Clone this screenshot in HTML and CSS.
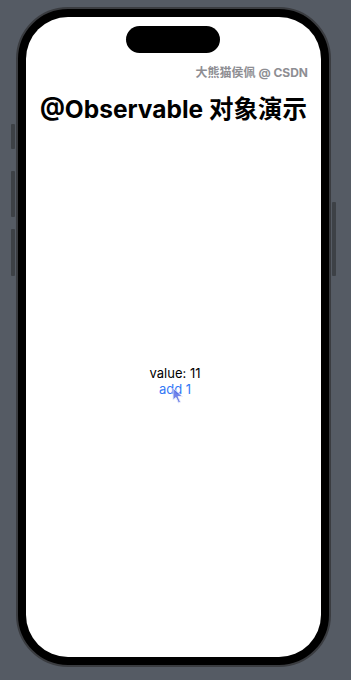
FILE: index.html
```html
<!DOCTYPE html>
<html lang="zh">

<head>
    <meta charset="UTF-8">
    <meta name="viewport" content="width=device-width, initial-scale=1.0">
    <title>@Observable 对象演示</title>
    <link rel="stylesheet" href="styles.css">
</head>

<body>
    <div class="phone">
        <div class="side-button mute"></div>
        <div class="side-button vol-up"></div>
        <div class="side-button vol-down"></div>
        <div class="side-button power"></div>

        <div class="screen">
            <div class="island"></div>
            <div class="watermark">大熊猫侯佩 @ CSDN</div>
            <h1 class="title">@Observable 对象演示</h1>

            <div class="center">
                <div class="value">value: 11</div>
                <div class="add-button">add 1
                    <svg class="cursor" width="12" height="17" viewBox="0 0 12 17">
                        <path d="M1 1 L1 13 L4 10.5 L6.5 16 L8.5 15 L6 9.5 L10.5 9.5 Z" fill="#5b6fe6" stroke="#e8ebfa" stroke-width="1" stroke-linejoin="round" opacity="0.85" />
                    </svg>
                </div>
            </div>
        </div>
    </div>
</body>

</html>
```

FILE: styles.css
```css
body {
    margin: 0;
    background-color: #555b64;
    font-family: 'Inter', 'Liberation Sans', 'Noto Sans CJK SC', sans-serif;
    height: 680px;
    overflow: hidden;
}

.phone {
    position: relative;
    width: 315px;
    height: 660px;
    margin: 7px 0 0 16px;
    box-sizing: border-box;
    border: 2px solid #3a3c40;
    border-radius: 52px;
    background-color: #000;
    padding: 8px;
}

.side-button {
    position: absolute;
    width: 4px;
    background-color: #3d4146;
    border-radius: 1px;
}

.mute {
    left: -7px;
    top: 115px;
    height: 25px;
}

.vol-up {
    left: -7px;
    top: 162px;
    height: 46px;
}

.vol-down {
    left: -7px;
    top: 220px;
    height: 47px;
}

.power {
    right: -7px;
    top: 193px;
    height: 74px;
}

.screen {
    height: 100%;
    background-color: #fff;
    border-radius: 42px;
    display: flex;
    flex-direction: column;
    overflow: hidden;
}

.island {
    align-self: center;
    width: 94px;
    height: 27px;
    margin-top: 9px;
    margin-left: -1px;
    background-color: #000;
    border-radius: 14px;
}

.watermark {
    margin-top: 12px;
    padding-right: 13px;
    text-align: right;
    font-size: 12px;
    font-weight: 700;
    color: #8e8e93;
    line-height: 15px;
}

.title {
    margin: 14px 0 0;
    text-align: center;
    font-size: 24.5px;
    font-weight: 700;
    line-height: 30px;
    color: #000;
}

.center {
    margin-top: 242px;
    display: flex;
    flex-direction: column;
    align-items: center;
    padding-left: 3px;
    font-size: 13px;
    line-height: 15px;
}

.value {
    color: #000;
}

.add-button {
    position: relative;
    color: #3478f6;
    margin-top: 1px;
}

.cursor {
    position: absolute;
    left: 13px;
    top: 5px;
}
```
